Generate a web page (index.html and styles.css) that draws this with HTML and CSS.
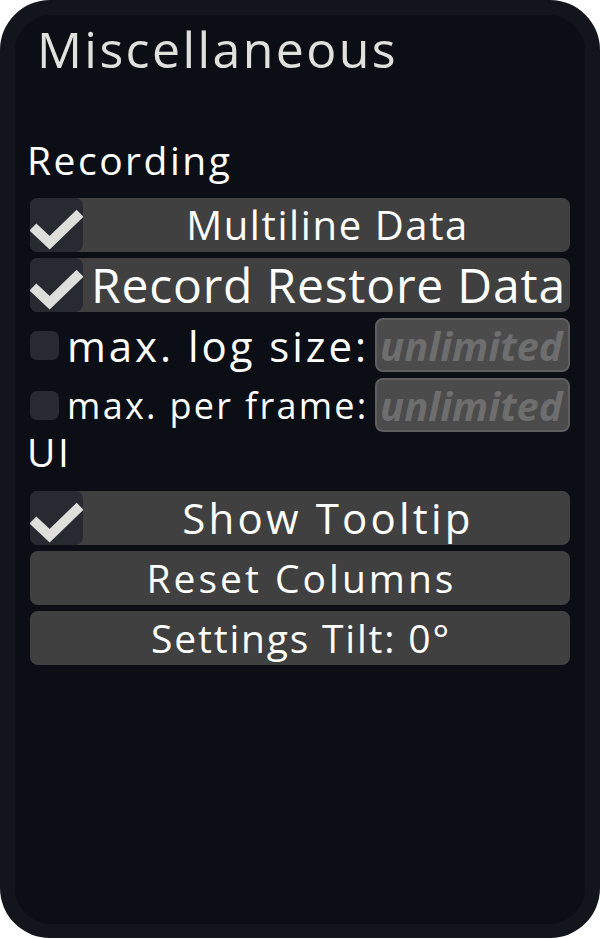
FILE: index.html
```html
<!DOCTYPE html>
<html>
<head>
<meta charset="utf-8">
<link rel="stylesheet" href="styles.css">
</head>
<body>
<div class="frame">
  <div class="panel">
    <h1 class="title">Miscellaneous</h1>
    <div class="section">Recording</div>
    <div class="rows rows-rec">
      <div class="btn btn-check">
        <span class="box"><svg viewBox="0 0 54 54"><path d="M3 29 L20 45 L51 15" /></svg></span>
        <span class="label l-multi">Multiline Data</span>
      </div>
      <div class="btn btn-check">
        <span class="box"><svg viewBox="0 0 54 54"><path d="M3 29 L20 45 L51 15" /></svg></span>
        <span class="label l-restore">Record Restore Data</span>
      </div>
      <div class="field">
        <span class="mini"></span>
        <span class="flabel l-log">max. log size:</span>
        <span class="input"><span class="ph">unlimited</span></span>
      </div>
      <div class="field">
        <span class="mini"></span>
        <span class="flabel l-frame">max. per frame:</span>
        <span class="input"><span class="ph">unlimited</span></span>
      </div>
    </div>
    <div class="section section-ui">UI</div>
    <div class="rows rows-ui">
      <div class="btn btn-check">
        <span class="box"><svg viewBox="0 0 54 54"><path d="M3 29 L20 45 L51 15" /></svg></span>
        <span class="label l-tooltip">Show Tooltip</span>
      </div>
      <div class="btn">
        <span class="label l-reset">Reset Columns</span>
      </div>
      <div class="btn">
        <span class="label l-tilt">Settings Tilt: 0°</span>
      </div>
    </div>
  </div>
</div>
</body>
</html>
```
FILE: styles.css
```css
html, body {
  margin: 0;
  padding: 0;
  background: #ffffff;
}
body {
  width: 600px;
  height: 939px;
  font-family: "Open Sans", "DejaVu Sans", sans-serif;
}
.frame {
  box-sizing: border-box;
  width: 600px;
  height: 938px;
  background: #12151c;
  border-radius: 50px;
  padding: 15px 15px 14px 15px;
}
.panel {
  box-sizing: border-box;
  height: 100%;
  background: #0b0e14;
  border-radius: 36px;
  padding: 0 15px;
  display: flex;
  flex-direction: column;
}
.title {
  margin: 0;
  padding: 0 0 0 7px;
  font-size: 50px;
  font-weight: 400;
  letter-spacing: 2.4px;
  line-height: 68px;
  color: #e0e0dc;
}
.section {
  margin-top: 53px;
  margin-left: -3px;
  font-size: 39px;
  letter-spacing: 2.5px;
  line-height: 48px;
  color: #ffffff;
}
.section-ui {
  margin-top: -6px;
  line-height: 52px;
}
.rows {
  display: flex;
  flex-direction: column;
  gap: 6px;
}
.rows-rec {
  margin-top: 14px;
}
.rows-ui {
  margin-top: 13px;
}
.btn {
  height: 54px;
  background: #404040;
  border-radius: 8px;
  display: flex;
  align-items: center;
  justify-content: center;
  color: #ffffff;
}
.btn-check {
  justify-content: flex-start;
}
.box {
  flex: none;
  width: 53px;
  height: 54px;
  background: #272a31;
  border-radius: 8px;
  display: flex;
  overflow: hidden;
}
.box svg {
  width: 54px;
  height: 54px;
}
.box path {
  fill: none;
  stroke: #dededa;
  stroke-width: 10;
  stroke-linejoin: miter;
}
.label {
  flex: 1;
  text-align: center;
  white-space: nowrap;
  line-height: 54px;
}
.l-multi { font-size: 40px; letter-spacing: 1.6px; padding-left: 2px; }
.l-restore { font-size: 48px; letter-spacing: 0.8px; text-align: left; padding-left: 8px; }
.l-tooltip { font-size: 42px; letter-spacing: 3.2px; padding-left: 3px; }
.l-reset { font-size: 39px; letter-spacing: 3px; padding-left: 3px; }
.l-tilt { font-size: 39px; letter-spacing: 1.8px; padding-left: 2px; }
.field {
  height: 54px;
  display: flex;
  align-items: center;
  gap: 8px;
  color: #ffffff;
}
.mini {
  flex: none;
  width: 29px;
  height: 29px;
  background: #272a31;
  border-radius: 7px;
}
.flabel {
  width: 300px;
  white-space: nowrap;
  margin-left: 0;
}
.l-log { font-size: 42px; letter-spacing: 2.95px; }
.l-frame { font-size: 36px; letter-spacing: 2.3px; }
.input {
  box-sizing: border-box;
  flex: 1;
  height: 54px;
  background: #4b4b4b;
  border: 2px solid #5e5e5e;
  border-radius: 8px;
  overflow: hidden;
  display: flex;
  align-items: center;
  padding-left: 3px;
}
.ph {
  font-size: 40px;
  font-weight: 700;
  font-style: italic;
  color: #6e6e6e;
  white-space: nowrap;
}
```
